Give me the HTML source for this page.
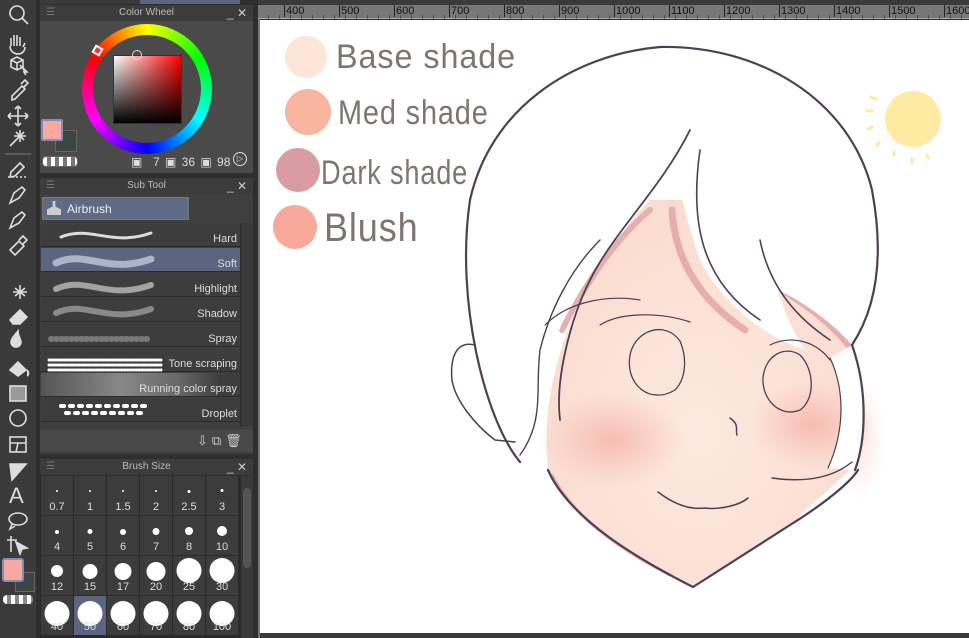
<!DOCTYPE html>
<html><head><style>
*{margin:0;padding:0;box-sizing:border-box}
body{width:969px;height:638px;background:#2e2e2e;position:relative;overflow:hidden;font-family:"Liberation Sans",sans-serif;color:#ddd}
.abs{position:absolute}
.hdr{position:absolute;height:16px;background:#3c3c3c;font-size:10px;color:#bbb;text-align:center;line-height:16px}
.hdr .x{position:absolute;right:6px;top:0;font-size:12px;color:#ccc}
.hdr .m{position:absolute;left:6px;top:0;color:#777}
.row{position:absolute;left:41px;width:199px;height:24px;background:#3d3d3d;border-bottom:1px solid #2a2a2a;font-size:11px;color:#ddd;text-align:right;padding-right:3px;line-height:32px}
.cell{position:absolute;width:33px;height:40px;background:#3c3c3c;border-right:1px solid #2a2a2a;border-bottom:1px solid #2a2a2a;text-align:center;font-size:11px;color:#ddd}
.cell .d{position:absolute;background:#fff;border-radius:50%;left:50%;transform:translateX(-50%)}
.cell .n{position:absolute;left:0;right:0;bottom:2px}
.t{position:absolute;font-family:"Liberation Sans",sans-serif;color:#807471;font-size:34px;transform-origin:left top;letter-spacing:1px}
</style></head><body>
<div class="abs" style="left:0;top:0;width:36px;height:638px;background:#3a3a3a"></div>
<svg class="abs" style="left:0;top:0" width="36" height="610" fill="none" stroke="#ddd" stroke-width="1.6">
<circle cx="17" cy="13" r="7"/><path d="M22 18l6 6"/>
<path d="M11 46v-8M14 46v-11M17 46v-11M20 46v-9M23 47l2-4M10 46c0 5 4 8 8 8s7-3 7-7"/>
<path d="M11 60l6-3 6 3v7l-6 3-6-3z M17 63v7 M11 60l6 3 6-3"/><path d="M20 65l7 7-3 0 2 3" fill="#ddd"/>
<path d="M12 96l10-10 3 3-10 10-3 1z M21 84l4-4 3 3-4 4"/>
<path d="M18 106v20M8 116h20M18 106l-3 3M18 106l3 3M18 126l-3-3M18 126l3-3M8 116l3-3M8 116l3 3M28 116l-3-3M28 116l-3 3"/>
<path d="M10 146l10-10M20 130v12M14 136h12M16 132l8 8M24 132l-8 8"/>
<path d="M5 154h26" stroke="#666"/>
<path d="M11 172l9-9 4 4-9 9-5 1z" /><path d="M8 177h20" stroke-dasharray="2 2"/>
<path d="M10 203l4-10 8-6 3 3-6 8-9 5z"/>
<path d="M10 228l4-10 8-6 3 3-6 8-9 5z"/>
<path d="M10 250l9-9 5 5-9 9z M19 240l4-4 4 4-4 4"/>
<path d="M20 285l0 14M13 292h14M15 288l10 8M25 288l-10 8"/>
<path d="M10 320l10-10 7 7-7 7h-7z" fill="#ddd"/>
<path d="M18 331c-4 5-7 8-7 11a5 5 0 0 0 10 0c0-3-3-6-3-11z" fill="#ddd"/>
<path d="M10 370l8-8 8 8-8 6z M27 370c2 2 2 5 0 6" fill="#ddd"/>
<rect x="10" y="386" width="16" height="15" fill="#999"/>
<circle cx="18" cy="418" r="8"/>
<rect x="10" y="437" width="16" height="15"/><path d="M10 443h16M18 443l-2 9"/>
<path d="M10 464h16l-14 16z" fill="#ddd"/>
<text x="9" y="503" fill="#ddd" stroke="none" font-size="22" font-family="Liberation Sans">A</text>
<ellipse cx="18" cy="519" rx="9" ry="6"/><path d="M12 524l-2 5 5-3"/>
<path d="M11 536v16M7 540h10" /><path d="M16 542l11 6-5 1 -2 5z" fill="#ddd"/>
</svg>
<div class="abs" style="left:15px;top:572px;width:20px;height:20px;border:1px solid #666;background:#3c4444"></div>
<div class="abs" style="left:2px;top:558px;width:22px;height:24px;border:2px solid #7c8fc2;border-radius:3px;background:#f9a89d"></div>
<div class="abs" style="left:3px;top:595px;width:30px;height:9px;border-radius:4px;background:repeating-linear-gradient(90deg,#fff 0 4px,#888 4px 8px)"></div>

<div class="abs" style="left:40px;top:0;width:100px;height:4px;background:#3a3a3a"></div>
<div class="abs" style="left:140px;top:0;width:100px;height:4px;background:#5b6580"></div>

<div class="hdr" style="left:40px;top:5px;width:213px"><span class="m">☰</span>Color Wheel<span class="x">_ ✕</span></div>
<div class="abs" style="left:40px;top:21px;width:213px;height:152px;background:#4a4a4a"></div>
<div class="abs" style="left:82px;top:24px;width:130px;height:130px;border-radius:50%;background:conic-gradient(from 0deg,#ff0 0deg,#0f0 60deg,#0ff 120deg,#00f 180deg,#f0f 240deg,#f00 300deg,#ff0 360deg)"></div>
<div class="abs" style="left:93px;top:35px;width:108px;height:108px;border-radius:50%;background:#4a4a4a"></div>
<div class="abs" style="left:113px;top:55px;width:69px;height:69px;background:linear-gradient(to top,#000,rgba(0,0,0,0)),linear-gradient(to right,#fff,#f00);border:1px solid #333"></div>
<div class="abs" style="left:132px;top:50px;width:10px;height:10px;border:1px solid #ddd;border-radius:50%"></div>
<div class="abs" style="left:93px;top:46px;width:9px;height:9px;border:2px solid #fff;background:#e33;transform:rotate(30deg)"></div>
<div class="abs" style="left:55px;top:130px;width:22px;height:22px;border:1px solid #666;background:#3c4444"></div>
<div class="abs" style="left:41px;top:119px;width:22px;height:22px;border:2px solid #7c8fc2;border-radius:2px;background:#f9a89d"></div>
<div class="abs" style="left:42px;top:156px;width:36px;height:11px;border:1px solid #666;border-radius:4px;background:repeating-linear-gradient(90deg,#fff 0 4px,#777 4px 8px)"></div>
<div class="abs" style="left:131px;top:155px;font-size:12px;color:#ddd;word-spacing:2px">▣ &nbsp;7 ▣ 36 ▣ 98</div>
<div class="abs" style="left:233px;top:152px;width:14px;height:14px;border:1px solid #ddd;border-radius:50%;font-size:8px;text-align:center;line-height:12px">▷</div>

<div class="hdr" style="left:40px;top:178px;width:213px"><span class="m">☰</span>Sub Tool<span class="x">_ ✕</span></div>
<div class="abs" style="left:40px;top:194px;width:213px;height:260px;background:#3f3f3f"></div>
<div class="abs" style="left:42px;top:197px;width:147px;height:23px;background:#5f6b85;border:1px solid #777;font-size:12px;line-height:22px;padding-left:24px;color:#eee">Airbrush</div>
<div class="abs" style="left:47px;top:201px;width:14px;height:14px;background:#ccc;clip-path:polygon(40% 0,60% 0,60% 40%,100% 60%,100% 100%,0 100%,0 60%,40% 40%)"></div>
<div class="abs" style="left:240px;top:223px;width:13px;height:203px;background:#3a3a3a;border-left:1px solid #2a2a2a"></div>
<div class="row" style="top:223px">Hard</div>
<div class="row" style="top:248px;background:#5b6580">Soft</div>
<div class="row" style="top:273px">Highlight</div>
<div class="row" style="top:298px">Shadow</div>
<div class="row" style="top:323px">Spray</div>
<div class="row" style="top:348px">Tone scraping</div>
<div class="row" style="top:373px;background:linear-gradient(90deg,#555,#888 40%,#666 70%,#3d3d3d 90%)">Running color spray</div>
<div class="row" style="top:398px">Droplet</div>
<svg class="abs" style="left:41px;top:223px" width="130" height="200" fill="none" stroke-linecap="round">
<path d="M20 14c30-12 50 10 90-4" stroke="#ddd" stroke-width="3"/>
<path d="M15 40c30-14 50 12 95-4" stroke="#cfd6e6" stroke-width="7" opacity=".7"/>
<path d="M15 66c30-14 50 12 95-4" stroke="#bbb" stroke-width="6" opacity=".8"/>
<path d="M15 90c30-14 50 12 95-4" stroke="#aaa" stroke-width="6" opacity=".7"/>
<path d="M10 116h100" stroke="#777" stroke-width="6" stroke-dasharray="1 4"/>
<path d="M8 137h112M8 142h112M8 147h112" stroke="#fff" stroke-width="3" stroke-dasharray="1 2"/>
<path d="M20 183h90M25 190h80" stroke="#fff" stroke-width="4" stroke-dasharray="3 6"/>
</svg>
<div class="abs" style="left:40px;top:430px;width:213px;height:22px;background:#484848"></div>
<div class="abs" style="left:197px;top:433px;font-size:13px;color:#ccc;letter-spacing:4px">⇩⧉🗑</div>

<div class="hdr" style="left:40px;top:459px;width:213px"><span class="m">☰</span>Brush Size<span class="x">_ ✕</span></div>
<div class="abs" style="left:40px;top:475px;width:213px;height:163px;background:#2a2a2a"></div>
<div class="abs" style="left:241px;top:476px;width:12px;height:162px;background:#3a3a3a"></div>
<div class="abs" style="left:243px;top:488px;width:8px;height:80px;background:#555;border-radius:4px"></div>
<div class="cell" style="left:41px;top:476px"><div class="d" style="top:14px;width:2px;height:2px"></div><div class="n">0.7</div></div>
<div class="cell" style="left:74px;top:476px"><div class="d" style="top:14px;width:2px;height:2px"></div><div class="n">1</div></div>
<div class="cell" style="left:107px;top:476px"><div class="d" style="top:14px;width:2px;height:2px"></div><div class="n">1.5</div></div>
<div class="cell" style="left:140px;top:476px"><div class="d" style="top:14px;width:2px;height:2px"></div><div class="n">2</div></div>
<div class="cell" style="left:173px;top:476px"><div class="d" style="top:14px;width:3px;height:3px"></div><div class="n">2.5</div></div>
<div class="cell" style="left:206px;top:476px"><div class="d" style="top:13px;width:3px;height:3px"></div><div class="n">3</div></div>
<div class="cell" style="left:41px;top:516px"><div class="d" style="top:14px;width:4px;height:4px"></div><div class="n">4</div></div>
<div class="cell" style="left:74px;top:516px"><div class="d" style="top:13px;width:5px;height:5px"></div><div class="n">5</div></div>
<div class="cell" style="left:107px;top:516px"><div class="d" style="top:13px;width:6px;height:6px"></div><div class="n">6</div></div>
<div class="cell" style="left:140px;top:516px"><div class="d" style="top:12px;width:7px;height:7px"></div><div class="n">7</div></div>
<div class="cell" style="left:173px;top:516px"><div class="d" style="top:11px;width:8px;height:8px"></div><div class="n">8</div></div>
<div class="cell" style="left:206px;top:516px"><div class="d" style="top:10px;width:10px;height:10px"></div><div class="n">10</div></div>
<div class="cell" style="left:41px;top:556px"><div class="d" style="top:9px;width:12px;height:12px"></div><div class="n">12</div></div>
<div class="cell" style="left:74px;top:556px"><div class="d" style="top:8px;width:15px;height:15px"></div><div class="n">15</div></div>
<div class="cell" style="left:107px;top:556px"><div class="d" style="top:7px;width:17px;height:17px"></div><div class="n">17</div></div>
<div class="cell" style="left:140px;top:556px"><div class="d" style="top:6px;width:19px;height:19px"></div><div class="n">20</div></div>
<div class="cell" style="left:173px;top:556px"><div class="d" style="top:2px;width:25px;height:25px"></div><div class="n">25</div></div>
<div class="cell" style="left:206px;top:556px"><div class="d" style="top:2px;width:25px;height:25px"></div><div class="n">30</div></div>
<div class="cell" style="left:41px;top:596px"><div class="d" style="top:5px;width:25px;height:25px"></div><div class="n">40</div></div>
<div class="cell" style="left:74px;top:596px;background:#5b6580"><div class="d" style="top:5px;width:25px;height:25px"></div><div class="n">50</div></div>
<div class="cell" style="left:107px;top:596px"><div class="d" style="top:5px;width:25px;height:25px"></div><div class="n">60</div></div>
<div class="cell" style="left:140px;top:596px"><div class="d" style="top:5px;width:25px;height:25px"></div><div class="n">70</div></div>
<div class="cell" style="left:173px;top:596px"><div class="d" style="top:5px;width:25px;height:25px"></div><div class="n">80</div></div>
<div class="cell" style="left:206px;top:596px"><div class="d" style="top:5px;width:25px;height:25px"></div><div class="n">100</div></div>

<div class="abs" style="left:258px;top:0;width:711px;height:5px;background:#3a3a3a"></div>
<div class="abs" style="left:258px;top:5px;width:711px;height:14px;background:#777;border-bottom:1px solid #aaa"></div>
<div class="abs" style="left:260px;top:5px;width:711px;height:14px;background:repeating-linear-gradient(90deg,transparent 0 8px,#222 8px 9px,transparent 9px 11px);opacity:.5;-webkit-mask:linear-gradient(to top,#000 4px,transparent 4px)"></div>
<div class="abs" style="left:284px;top:5px;font-size:11px;color:#111;white-space:nowrap">
<span style="display:inline-block;width:55px;border-left:1px solid #222;padding-left:1px">400</span><span style="display:inline-block;width:55px;border-left:1px solid #222;padding-left:1px">500</span><span style="display:inline-block;width:55px;border-left:1px solid #222;padding-left:1px">600</span><span style="display:inline-block;width:55px;border-left:1px solid #222;padding-left:1px">700</span><span style="display:inline-block;width:55px;border-left:1px solid #222;padding-left:1px">800</span><span style="display:inline-block;width:55px;border-left:1px solid #222;padding-left:1px">900</span><span style="display:inline-block;width:55px;border-left:1px solid #222;padding-left:1px">1000</span><span style="display:inline-block;width:55px;border-left:1px solid #222;padding-left:1px">1100</span><span style="display:inline-block;width:55px;border-left:1px solid #222;padding-left:1px">1200</span><span style="display:inline-block;width:55px;border-left:1px solid #222;padding-left:1px">1300</span><span style="display:inline-block;width:55px;border-left:1px solid #222;padding-left:1px">1400</span><span style="display:inline-block;width:55px;border-left:1px solid #222;padding-left:1px">1500</span><span style="display:inline-block;width:55px;border-left:1px solid #222;padding-left:1px">1600</span></div>
<div class="abs" style="left:258px;top:19px;width:2px;height:619px;background:#777"></div>

<div class="abs" style="left:260px;top:20px;width:709px;height:613px;background:#fff"></div>
<div class="abs" style="left:260px;top:633px;width:709px;height:5px;background:#3a3a3a"></div>
<svg class="abs" style="left:0;top:0" width="969" height="633">
<defs>
<radialGradient id="bl" cx=".5" cy=".5" r=".5"><stop offset="0" stop-color="#f5b2a6" stop-opacity=".8"/><stop offset="1" stop-color="#f7b9ad" stop-opacity="0"/></radialGradient>
<radialGradient id="sk" cx=".5" cy=".6" r=".6"><stop offset="0" stop-color="#fde9df"/><stop offset="1" stop-color="#fbdcd0"/></radialGradient>
</defs>
<circle cx="306" cy="57" r="21" fill="#fde5d8"/>
<circle cx="308" cy="112" r="23" fill="#f8b59f"/>
<circle cx="298" cy="170" r="22" fill="#d99ca3"/>
<circle cx="295" cy="227" r="22" fill="#f7a99a"/>
<circle cx="913" cy="119" r="28" fill="#feeaa0"/>
<g stroke="#fde8a0" stroke-width="3" stroke-linecap="round">
<path d="M871 97l5 2M867 111h5M868 129l4-2M877 146l2-3M894 155v-3M912 163v-4M928 158l-1-3"/></g>
<ellipse cx="860" cy="440" rx="25" ry="60" fill="url(#bl)" opacity=".4"/>
<path d="M548 470C540 400 560 300 650 200L700 200L852 345L850 470L790 525L693 587C640 560 570 520 548 470Z" fill="url(#sk)"/>
<ellipse cx="612" cy="440" rx="72" ry="48" fill="url(#bl)"/>
<ellipse cx="812" cy="425" rx="62" ry="44" fill="url(#bl)"/>
<g fill="none" stroke="#e6aeac" stroke-linecap="round">
<path d="M562 330C590 275 620 235 650 210" stroke-width="6"/>
<path d="M672 210C675 260 700 300 745 330" stroke-width="7"/>
<path d="M785 292C805 305 830 322 848 345" stroke-width="6"/>
<path d="M552 475C575 520 625 552 670 575" stroke-width="3"/>
</g>
<path d="M475 345C455 250 470 130 560 80C640 30 790 40 845 130C890 200 885 300 852 345C830 320 800 300 778 290C785 315 795 335 805 350C760 335 720 300 700 260C690 230 680 200 672 140C650 180 610 230 585 275C565 310 545 360 535 420C530 440 525 455 520 462C500 440 485 400 475 345Z" fill="#fff"/>
<path d="M852 345C868 390 866 440 855 470L828 468C845 430 845 390 830 358Z" fill="#fff"/>
<g fill="none" stroke="#4d3f55" stroke-width="2.2" stroke-linecap="round">
<path d="M520 462C485 420 455 300 470 200C490 110 570 55 660 47C760 45 850 100 872 190C885 260 875 310 852 345"/>
<path d="M852 345C868 390 866 440 855 470"/>
<path d="M548 470C570 520 640 560 693 587L790 525C830 500 852 480 858 470"/>
<path d="M475 345C455 340 450 360 452 380C455 400 475 425 495 440L515 442" stroke-width="1.5"/>
<path d="M690 130C660 190 615 230 590 280C570 320 555 380 560 420" stroke-width="1.8"/>
<path d="M700 150C690 220 700 280 760 320" stroke-width="1.6"/>
<path d="M760 240C770 290 800 320 830 340" stroke-width="1.6"/>
<path d="M600 240C570 270 550 310 540 350C535 390 545 420 520 455" stroke-width="1.4"/>
<path d="M545 325C570 300 610 295 640 300" stroke-width="1.2"/>
<path d="M680 341C665 320 635 330 630 355C625 385 650 405 675 390C685 380 688 360 680 341Z" stroke-width="1.3"/>
<path d="M800 355C785 345 765 355 763 378C762 400 780 418 800 410C815 400 815 370 800 355Z" stroke-width="1.3"/>
<path d="M600 325C620 312 660 312 690 322" stroke-width="1.2"/>
<path d="M770 345C790 335 815 340 830 360" stroke-width="1.2"/>
<path d="M730 418C740 425 735 430 737 435" stroke-width="1.5"/>
<path d="M658 492C675 505 690 510 705 508C720 510 740 505 748 498" stroke-width="1.5"/>
<path d="M772 478C800 482 830 480 852 462" stroke-width="1.4"/>
<path d="M830 358C845 390 845 430 828 468" stroke-width="1.2"/>
</g>
</svg>
<div class="t" style="left:336px;top:38px;transform:scaleX(0.95)">Base shade</div>
<div class="t" style="left:338px;top:94px;transform:scaleX(0.85)">Med shade</div>
<div class="t" style="left:321px;top:154px;transform:scaleX(0.8)">Dark shade</div>
<div class="t" style="left:324px;top:206px;font-size:40px;transform:scaleX(0.9)">Blush</div>
</body></html>
